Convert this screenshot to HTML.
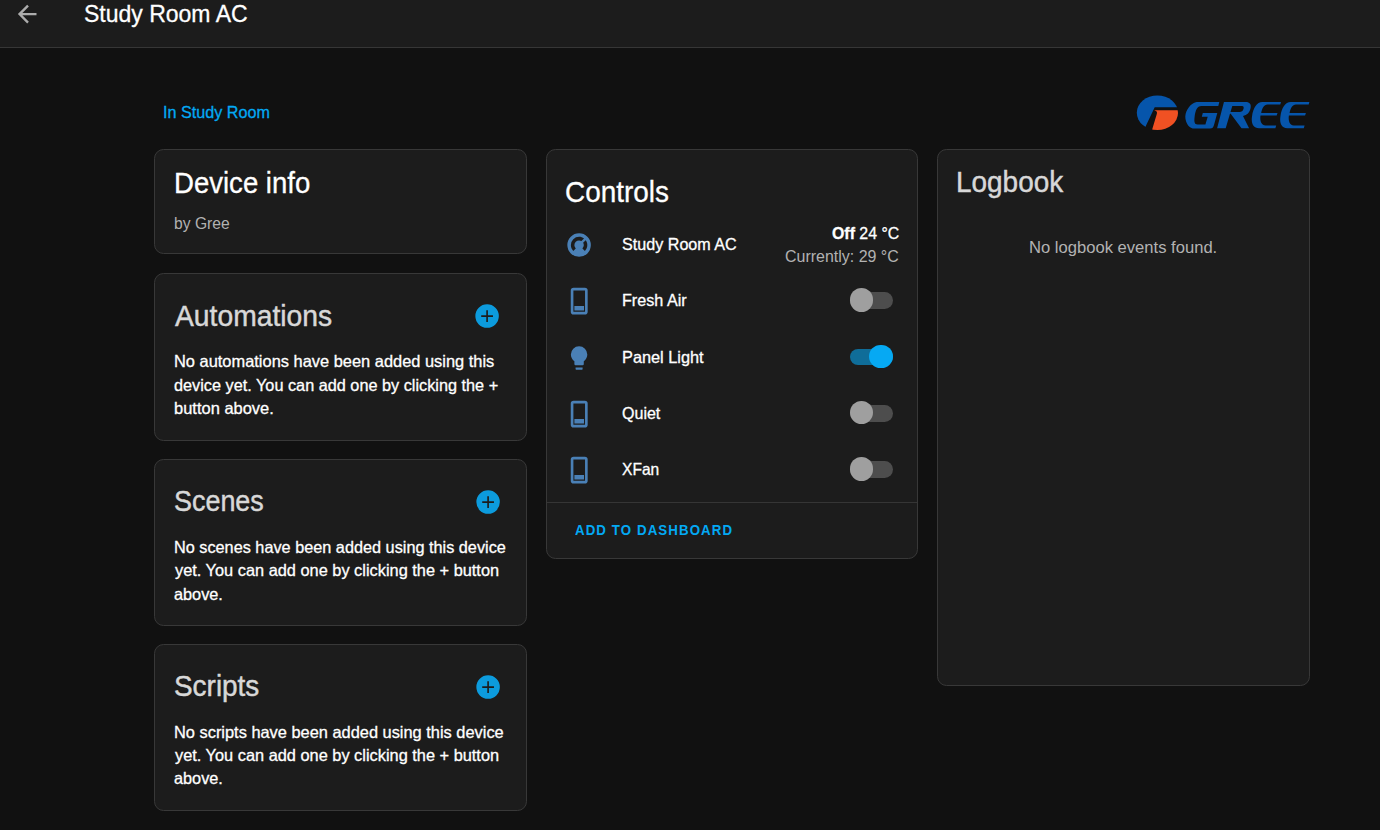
<!DOCTYPE html>
<html lang="en">
<head>
<meta charset="utf-8">
<title>Study Room AC</title>
<style>
html,body{margin:0;padding:0}
body{width:1380px;height:830px;overflow:hidden;background:#111111;position:relative;font-family:"Liberation Sans",sans-serif}
.t{position:absolute;white-space:nowrap;line-height:1;transform-origin:0 0;font-family:"Liberation Sans",sans-serif}
.hdr{position:absolute;left:0;top:0;width:1380px;height:47px;background:#1c1c1c;border-bottom:1px solid #363636}
.card{position:absolute;box-sizing:border-box;background:#1c1c1c;border:1px solid #383838;border-radius:9.5px}
.abs{position:absolute}
.ic{position:absolute;width:28.2px;height:28.2px;fill:#4a80b6}
.plus{position:absolute;width:28.2px;height:28.2px;fill:#0c9bdd}
.trk{position:absolute;width:42.6px;height:16.8px;border-radius:8.4px;background:#4d4d4d}
.knb{position:absolute;width:23.7px;height:23.7px;border-radius:50%;background:#9f9f9f}
.trk.on{background:#0f6d99}
.knb.on{background:#06a9f3}
.div{position:absolute;height:1px;background:#353535}
</style>
</head>
<body>
<div class="hdr"></div>
<svg class="abs" style="left:13.4px;top:-0.1px;width:28.2px;height:28.2px;fill:#acacac" viewBox="0 0 24 24"><path d="M20,11V13H8L13.5,18.5L12.08,19.92L4.16,12L12.08,4.08L13.5,5.5L8,11H20Z"/></svg>

<!-- cards -->
<div class="card" style="left:154px;top:149px;width:373px;height:105px"></div>
<div class="card" style="left:154px;top:273px;width:373px;height:167.5px"></div>
<div class="card" style="left:154px;top:459px;width:373px;height:166.7px"></div>
<div class="card" style="left:154px;top:644px;width:373px;height:167px"></div>
<div class="card" style="left:546px;top:149px;width:372px;height:409.5px"></div>
<div class="card" style="left:937px;top:149px;width:373px;height:537px"></div>
<div class="div" style="left:547px;top:502px;width:370px"></div>

<!-- plus buttons -->
<svg class="plus" style="left:473.4px;top:302.2px" viewBox="0 0 24 24"><path d="M17,12.7H12.7V17H11.3V12.7H7V11.3H11.3V7H12.7V11.3H17M12,2A10,10 0 0,0 2,12A10,10 0 0,0 12,22A10,10 0 0,0 22,12A10,10 0 0,0 12,2Z"/></svg>
<svg class="plus" style="left:473.7px;top:488.1px" viewBox="0 0 24 24"><path d="M17,12.7H12.7V17H11.3V12.7H7V11.3H11.3V7H12.7V11.3H17M12,2A10,10 0 0,0 2,12A10,10 0 0,0 12,22A10,10 0 0,0 22,12A10,10 0 0,0 12,2Z"/></svg>
<svg class="plus" style="left:473.7px;top:673.2px" viewBox="0 0 24 24"><path d="M17,12.7H12.7V17H11.3V12.7H7V11.3H11.3V7H12.7V11.3H17M12,2A10,10 0 0,0 2,12A10,10 0 0,0 12,22A10,10 0 0,0 22,12A10,10 0 0,0 12,2Z"/></svg>

<!-- control icons -->
<svg class="ic" style="left:565.25px;top:230.8px" viewBox="0 0 24 24"><path d="M16.95,16.95L14.83,14.83C15.55,14.1 16,13.1 16,12C16,11.26 15.79,10.57 15.43,10L17.6,7.81C18.5,9 19,10.43 19,12C19,13.93 18.22,15.68 16.95,16.95M12,5C13.57,5 15,5.5 16.19,6.4L14,8.56C13.43,8.21 12.74,8 12,8A4,4 0 0,0 8,12C8,13.1 8.45,14.1 9.17,14.83L7.05,16.95C5.78,15.68 5,13.93 5,12A7,7 0 0,1 12,5M12,2A10,10 0 0,0 2,12A10,10 0 0,0 12,22A10,10 0 0,0 22,12A10,10 0 0,0 12,2Z"/></svg>
<svg class="ic" style="left:565.25px;top:287.35px" viewBox="0 0 24 24"><path fill-rule="evenodd" d="M7.3,0.55H16.9A2.4,2.4 0 0 1 19.3,2.95V21.05A2.4,2.4 0 0 1 16.9,23.45H7.3A2.4,2.4 0 0 1 4.9,21.05V2.95A2.4,2.4 0 0 1 7.3,0.55ZM7.15,3V21H17.05V3ZM8,16.1H16.2V20.1H8Z"/></svg>
<svg class="ic" style="left:565.25px;top:343.7px" viewBox="0 0 24 24"><path d="M12,2A7,7 0 0,0 5,9C5,11.38 6.19,13.47 8,14.74V17A1,1 0 0,0 9,18H15A1,1 0 0,0 16,17V14.74C17.81,13.47 19,11.38 19,9A7,7 0 0,0 12,2M9,21A1,1 0 0,0 10,22H14A1,1 0 0,0 15,21V20H9V21Z"/></svg>
<svg class="ic" style="left:565.25px;top:399.95px" viewBox="0 0 24 24"><path fill-rule="evenodd" d="M7.3,0.55H16.9A2.4,2.4 0 0 1 19.3,2.95V21.05A2.4,2.4 0 0 1 16.9,23.45H7.3A2.4,2.4 0 0 1 4.9,21.05V2.95A2.4,2.4 0 0 1 7.3,0.55ZM7.15,3V21H17.05V3ZM8,16.1H16.2V20.1H8Z"/></svg>
<svg class="ic" style="left:565.25px;top:456.25px" viewBox="0 0 24 24"><path fill-rule="evenodd" d="M7.3,0.55H16.9A2.4,2.4 0 0 1 19.3,2.95V21.05A2.4,2.4 0 0 1 16.9,23.45H7.3A2.4,2.4 0 0 1 4.9,21.05V2.95A2.4,2.4 0 0 1 7.3,0.55ZM7.15,3V21H17.05V3ZM8,16.1H16.2V20.1H8Z"/></svg>

<!-- toggles -->
<div class="trk" style="left:850.2px;top:292.1px"></div><div class="knb" style="left:849.8px;top:288px"></div>
<div class="trk on" style="left:850.2px;top:348.5px"></div><div class="knb on" style="left:868.9px;top:344.6px"></div>
<div class="trk" style="left:850.2px;top:404.9px"></div><div class="knb" style="left:849.8px;top:400.8px"></div>
<div class="trk" style="left:850.2px;top:461.3px"></div><div class="knb" style="left:849.8px;top:457.2px"></div>

<!-- Gree logo -->
<svg class="abs" style="left:1130px;top:90px;width:190px;height:45px" viewBox="0 0 190 45">
<defs><clipPath id="el"><ellipse cx="27.4" cy="22.75" rx="20.6" ry="17.35"/></clipPath></defs>
<g clip-path="url(#el)">
<path fill="#0655ab" d="M0,0H60V17.3H24.7L11.58,45H0Z"/>
<path fill="#f05123" d="M24.1,20.3H60V45H20.5L26.8,24C27.4,21.8 26.5,20.9 24.1,20.3Z"/>
</g>
<g fill="#0655ab">
<path d="M66.7,12.1 L89.3,12.1 L88.3,15.9 L71.5,15.9 C67,15.9 65.5,20 64.6,27 C64,32 64.5,34.4 67.5,34.4 L75.4,34.4 L77.7,26.8 L71.8,26.8 L72.8,23 L87.3,23 L84,35 C83.3,37.5 82.5,38.5 80,38.5 L62.7,38.5 C57.8,37.3 55.2,31.3 55.3,26.3 C56.1,20.1 59.9,13.7 66.7,12.1 Z"/>
<path fill-rule="evenodd" d="M93.95,12.1 L115.5,12.1 C120,12.1 121.3,14.5 120.6,18 C119.8,22.5 117,25.2 113,26 L119.1,38.2 L111.5,38.2 L100.5,23.5 L99.9,24 L95.7,38.2 L87.1,38.2 Z M102.3,15.9 L112,15.9 C113.8,15.9 113.9,17.5 113.5,18.8 C113,21 111.5,22 109.5,22 L100.5,22 Z"/>
<path id="E" d="M132.25,12.1 L151,12.1 L150.3,14.6 L137.5,14.6 C134,14.6 132,18.5 131.2,23 L147.5,23 L146.7,25.5 L130.5,25.5 C129.8,30 130.8,35.4 135.5,35.4 L146.2,35.4 L145.4,38.2 L129,38.2 C123,38.2 121,33 122,26.5 C123.2,18 127,12.1 132.25,12.1 Z"/>
<path transform="translate(28.4,0)" d="M132.25,12.1 L151,12.1 L150.3,14.6 L137.5,14.6 C134,14.6 132,18.5 131.2,23 L147.5,23 L146.7,25.5 L130.5,25.5 C129.8,30 130.8,35.4 135.5,35.4 L146.2,35.4 L145.4,38.2 L129,38.2 C123,38.2 121,33 122,26.5 C123.2,18 127,12.1 132.25,12.1 Z"/>
</g>
</svg>

<span class="t" id="hdr" style="left:83.54px;top:2.00px;font-size:24.0px;color:#ffffff;-webkit-text-stroke:0.3px #ffffff;transform:scaleX(0.9580);">Study Room AC</span>
<span class="t" id="area" style="left:162.68px;top:104.00px;font-size:16.5px;color:#03a9f4;-webkit-text-stroke:0.3px #03a9f4;transform:scaleX(0.9794);">In Study Room</span>
<span class="t" id="t1" style="left:173.58px;top:169.00px;font-size:29.2px;color:#ffffff;-webkit-text-stroke:0.3px #ffffff;transform:scaleX(0.9440);">Device info</span>
<span class="t" id="by" style="left:174.28px;top:215.00px;font-size:17.0px;color:#b2b2b2;transform:scaleX(0.9209);">by Gree</span>
<span class="t" id="t2" style="left:174.54px;top:302.00px;font-size:29.2px;color:#d8d8d8;-webkit-text-stroke:0.45px #d8d8d8;transform:scaleX(0.9688);">Automations</span>
<span class="t" id="a1" style="left:174.16px;top:353.00px;font-size:16.5px;color:#ffffff;-webkit-text-stroke:0.3px #ffffff;transform:scaleX(0.9948);">No automations have been added using this</span>
<span class="t" id="a2" style="left:174.41px;top:377.00px;font-size:16.5px;color:#ffffff;-webkit-text-stroke:0.3px #ffffff;transform:scaleX(0.9858);">device yet. You can add one by clicking the +</span>
<span class="t" id="a3" style="left:174.40px;top:400.00px;font-size:16.5px;color:#ffffff;-webkit-text-stroke:0.3px #ffffff;transform:scaleX(0.9985);">button above.</span>
<span class="t" id="t3" style="left:174.18px;top:487.00px;font-size:29.2px;color:#d8d8d8;-webkit-text-stroke:0.45px #d8d8d8;transform:scaleX(0.9225);">Scenes</span>
<span class="t" id="s1" style="left:174.17px;top:539.00px;font-size:16.5px;color:#ffffff;-webkit-text-stroke:0.3px #ffffff;transform:scaleX(0.9857);">No scenes have been added using this device</span>
<span class="t" id="s2" style="left:174.90px;top:562.00px;font-size:16.5px;color:#ffffff;-webkit-text-stroke:0.3px #ffffff;transform:scaleX(0.9910);">yet. You can add one by clicking the + button</span>
<span class="t" id="s3" style="left:174.41px;top:586.00px;font-size:16.5px;color:#ffffff;-webkit-text-stroke:0.3px #ffffff;transform:scaleX(0.9864);">above.</span>
<span class="t" id="t4" style="left:174.14px;top:672.00px;font-size:29.2px;color:#d8d8d8;-webkit-text-stroke:0.45px #d8d8d8;transform:scaleX(0.9566);">Scripts</span>
<span class="t" id="p1" style="left:174.16px;top:724.00px;font-size:16.5px;color:#ffffff;-webkit-text-stroke:0.3px #ffffff;transform:scaleX(0.9929);">No scripts have been added using this device</span>
<span class="t" id="p2" style="left:174.90px;top:747.00px;font-size:16.5px;color:#ffffff;-webkit-text-stroke:0.3px #ffffff;transform:scaleX(0.9910);">yet. You can add one by clicking the + button</span>
<span class="t" id="p3" style="left:174.41px;top:770.00px;font-size:16.5px;color:#ffffff;-webkit-text-stroke:0.3px #ffffff;transform:scaleX(0.9864);">above.</span>
<span class="t" id="t5" style="left:565.21px;top:178.00px;font-size:29.2px;color:#ffffff;-webkit-text-stroke:0.3px #ffffff;transform:scaleX(0.9559);">Controls</span>
<span class="t" id="r1" style="left:621.61px;top:236.00px;font-size:16.5px;color:#ffffff;-webkit-text-stroke:0.3px #ffffff;transform:scaleX(0.9777);">Study Room AC</span>
<span class="t" id="r2" style="left:621.78px;top:292.00px;font-size:16.5px;color:#ffffff;-webkit-text-stroke:0.3px #ffffff;transform:scaleX(0.9792);">Fresh Air</span>
<span class="t" id="r3" style="left:621.76px;top:349.00px;font-size:16.5px;color:#ffffff;-webkit-text-stroke:0.3px #ffffff;transform:scaleX(0.9890);">Panel Light</span>
<span class="t" id="r4" style="left:622.01px;top:405.00px;font-size:16.5px;color:#ffffff;-webkit-text-stroke:0.3px #ffffff;transform:scaleX(0.9718);">Quiet</span>
<span class="t" id="r5" style="left:622.26px;top:461.00px;font-size:16.5px;color:#ffffff;-webkit-text-stroke:0.3px #ffffff;transform:scaleX(0.9438);">XFan</span>
<span class="t" id="st1" style="left:831.52px;top:225.00px;font-size:16.5px;color:#ffffff;-webkit-text-stroke:0.3px #ffffff;transform:scaleX(0.9623);"><b>Off</b> 24 °C</span>
<span class="t" id="st2" style="left:785.00px;top:248.00px;font-size:17.0px;color:#b2b2b2;transform:scaleX(0.9395);">Currently: 29 °C</span>
<span class="t" id="add" style="left:574.77px;top:523.00px;font-size:14.6px;color:#03a9f4;font-weight:700;letter-spacing:1.2px;transform:scaleX(0.9100);">ADD TO DASHBOARD</span>
<span class="t" id="t6" style="left:956.35px;top:168.00px;font-size:29.2px;color:#d8d8d8;-webkit-text-stroke:0.45px #d8d8d8;transform:scaleX(0.9569);">Logbook</span>
<span class="t" id="lb" style="left:1028.98px;top:239.00px;font-size:17.0px;color:#b2b2b2;transform:scaleX(0.9763);">No logbook events found.</span>
</body>
</html>
